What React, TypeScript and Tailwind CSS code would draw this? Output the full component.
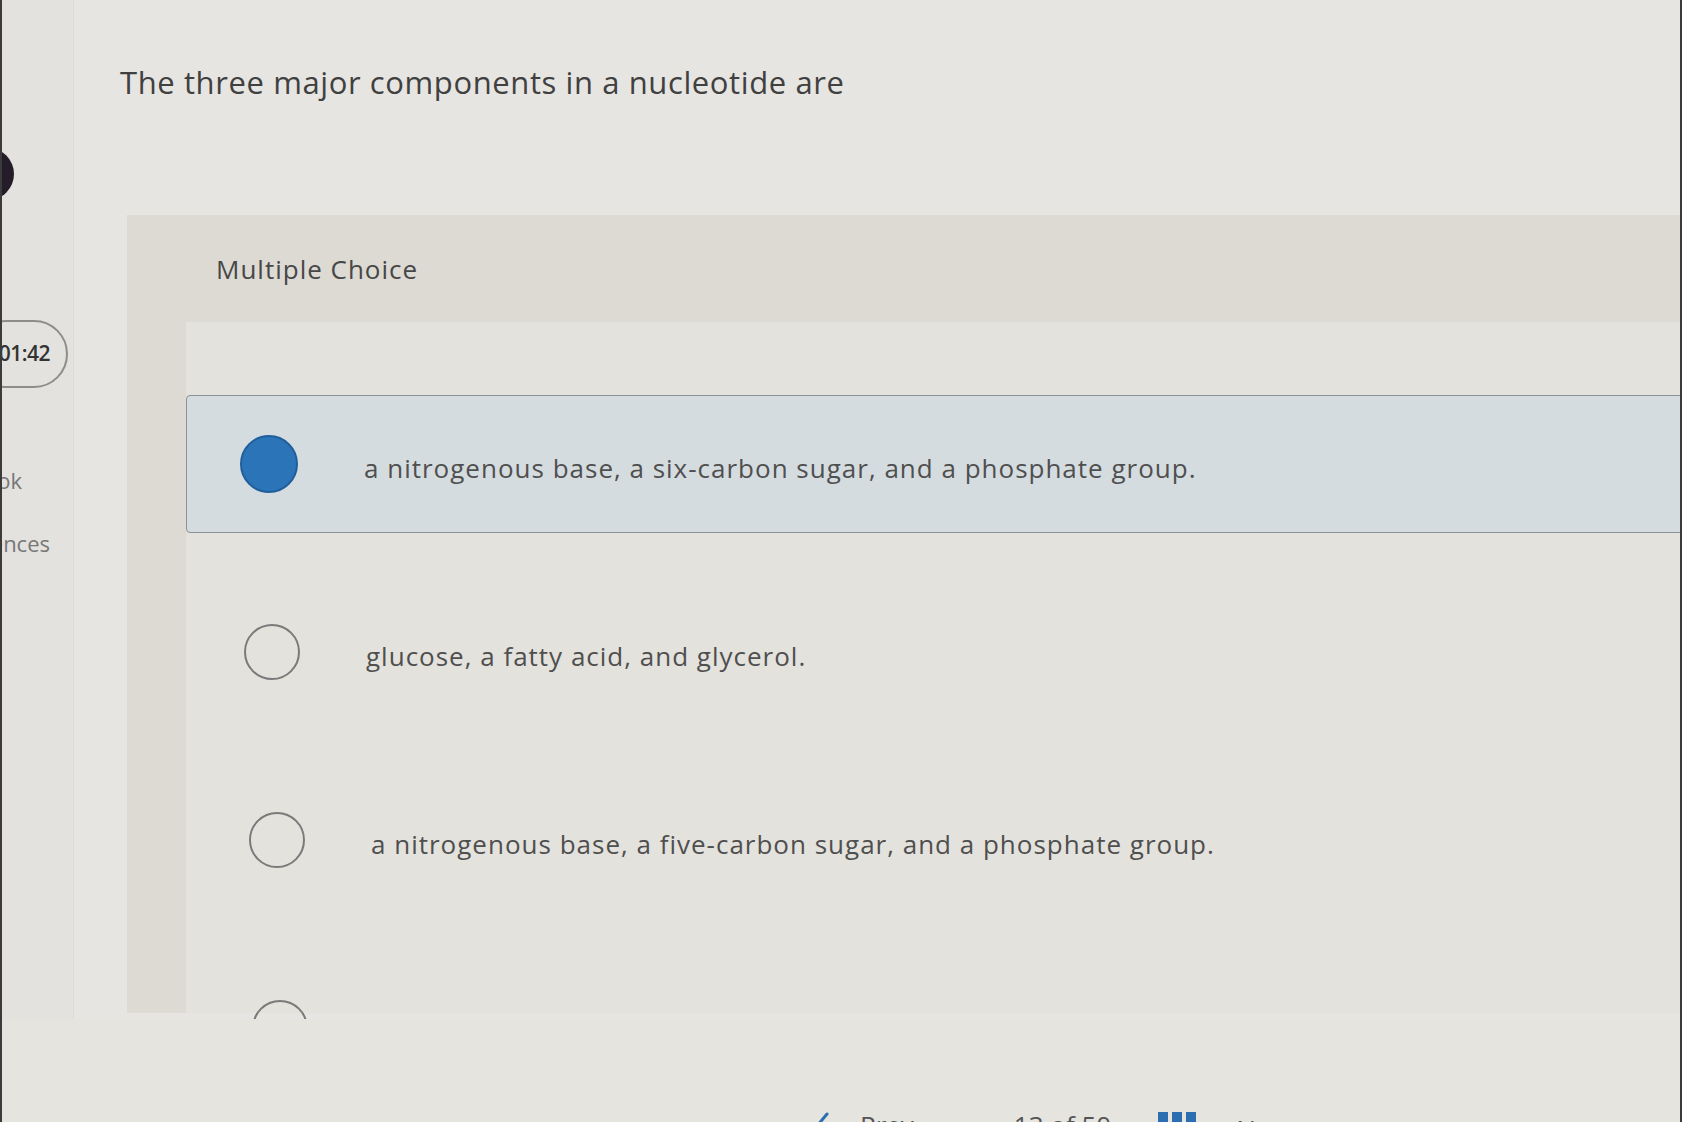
import { useState } from 'react'

type Choice = {
  id: string
  text: string
  shift: string
}

const choices: Choice[] = [
  { id: 'a', text: 'a nitrogenous base, a six-carbon sugar, and a phosphate group.', shift: 'pl-[53px]' },
  { id: 'b', text: 'glucose, a fatty acid, and glycerol.', shift: 'pl-[57px]' },
  { id: 'c', text: 'a nitrogenous base, a five-carbon sugar, and a phosphate group.', shift: 'pl-[62px]' },
  { id: 'd', text: 'an amino acid, a fatty acid, and a nucleic acid.', shift: 'pl-[65px]' },
]

function Radio({ checked }: { checked: boolean }) {
  if (checked) {
    return <span className="block h-[58px] w-[58px] shrink-0 rounded-full border-2 border-[#1f5f9c] bg-[#2c74b8]" />
  }
  return <span className="block h-[56px] w-[56px] shrink-0 rounded-full border-2 border-[#7a7a7a]" />
}

export default function App() {
  const [selected, setSelected] = useState('a')

  return (
    <div className="relative h-[1122px] w-full overflow-hidden border-x-2 border-[#3b3b3b] bg-[#e6e5e1] font-['Open_Sans',sans-serif]">
      <div className="flex h-full">
        {/* side rail */}
        <aside className="flex w-[72px] shrink-0 flex-col border-r border-[#dcdbd6] bg-[#e3e2de]">
          <span className="-ml-[40px] mt-[148px] block h-[52px] w-[52px] rounded-full bg-[#241d29]" />
          <div className="-ml-[30px] mt-[120px] flex h-[68px] w-[96px] items-center justify-end rounded-full border-2 border-[#8e8d89] pr-[16px] text-[21px] font-semibold tracking-[-0.5px] text-[#333]">
            01:42
          </div>
          <div className="mt-[76px] flex justify-end whitespace-nowrap pr-[51px] text-[22px] text-[#777]">eBook</div>
          <div className="mt-[30px] flex justify-end whitespace-nowrap pr-[23px] text-[22px] text-[#777]">References</div>
        </aside>

        <main className="flex min-w-0 flex-1 flex-col">
          <h1 className="shrink-0 pl-[46px] pt-[62px] text-[31px] leading-[40px] tracking-[0.6px] text-[#404040]">
            The three major components in a nucleotide are
          </h1>

          {/* question panel */}
          <section className="ml-[53px] mt-[113px] flex h-[798px] shrink-0 flex-col bg-[#dcdad3]">
            <div className="h-[107px] shrink-0 pl-[89px] pt-[39px] text-[26px] leading-[30px] tracking-[1px] text-[#474747]">
              Multiple Choice
            </div>
            <div className="ml-[59px] flex min-h-0 flex-1 flex-col gap-[50px] bg-[#e4e2dd] pt-[73px]">
              {choices.map((c) => {
                const on = selected === c.id
                return (
                  <button
                    key={c.id}
                    onClick={() => setSelected(c.id)}
                    className={`-mr-[20px] flex h-[138px] shrink-0 items-center rounded-[4px] border-[1.5px] text-left ${c.shift} ${
                      on ? 'border-[#8d9298] bg-[#d5dcdf]' : 'border-transparent'
                    }`}
                  >
                    <Radio checked={on} />
                    <span className="ml-[66px] pt-[8px] text-[26px] tracking-[1px] text-[#4f4f4f]">{c.text}</span>
                  </button>
                )
              })}
            </div>
          </section>
        </main>
      </div>

      {/* footer nav */}
      <footer className="absolute bottom-0 left-0 right-0 h-[103px] bg-[#e5e4df]">
        <div className="flex items-start pl-[812px] pt-[91px] text-[26px] leading-[30px]">
          <svg className="mt-[2px]" width="16" height="28" viewBox="0 0 16 28" fill="none" stroke="#2c6fb0" strokeWidth="3" strokeLinecap="round">
            <path d="M13 2 L3 14 L13 26" />
          </svg>
          <span className="ml-[30px] text-[#555]">Prev</span>
          <span className="ml-[100px] text-[#555]">13 of 50</span>
          <svg className="ml-[47px] mt-[2px]" width="38" height="38" viewBox="0 0 38 38" fill="#2c6fb0">
            <rect x="0" y="0" width="10" height="10" />
            <rect x="14" y="0" width="10" height="10" />
            <rect x="28" y="0" width="10" height="10" />
            <rect x="0" y="14" width="10" height="10" />
            <rect x="14" y="14" width="10" height="10" />
            <rect x="28" y="14" width="10" height="10" />
            <rect x="0" y="28" width="10" height="10" />
            <rect x="14" y="28" width="10" height="10" />
            <rect x="28" y="28" width="10" height="10" />
          </svg>
          <span className="ml-[40px] mt-[4px] text-[#555]">Next</span>
        </div>
      </footer>
    </div>
  )
}
